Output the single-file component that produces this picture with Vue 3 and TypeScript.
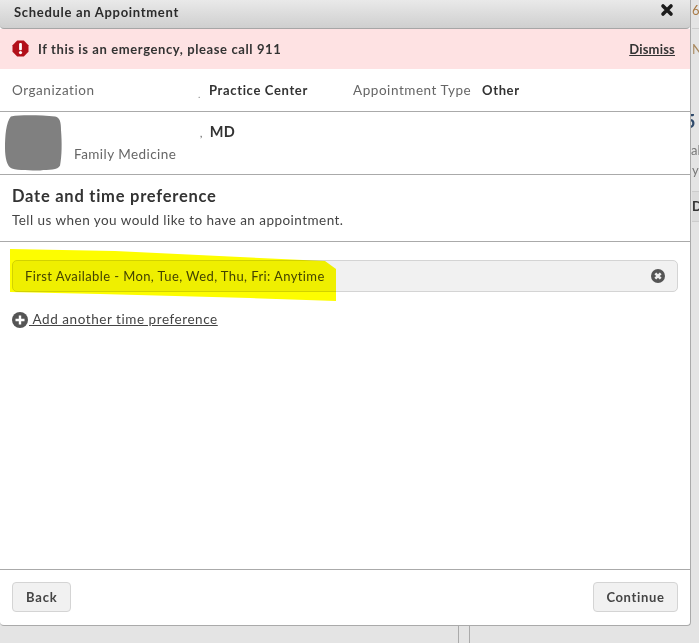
<script setup lang="ts">
const title = 'Schedule an Appointment'
const slot = 'First Available - Mon, Tue, Wed, Thu, Fri: Anytime'
</script>

<template>
  <div class="page">
    <section class="modal">
      <header class="head">
        <h1>{{ title }}</h1>
        <svg class="close" viewBox="0 0 14 14" width="14" height="14"><path d="M3 3 L11 11 M11 3 L3 11" stroke="#1c1c1c" stroke-width="3.6" stroke-linecap="round" /></svg>
      </header>
      <div class="alert">
        <svg class="alert-icon" viewBox="0 0 17 17" width="17" height="17">
          <path d="M5.2 0.5 H11.8 L16.5 5.2 V11.8 L11.8 16.5 H5.2 L0.5 11.8 V5.2 Z" fill="#b2101a" />
          <rect x="7.1" y="3" width="2.8" height="7.2" rx="1" fill="#fff" />
          <circle cx="8.5" cy="12.6" r="1.6" fill="#fff" />
        </svg>
        <strong>If this is an emergency, please call 911</strong>
        <a class="dismiss">Dismiss</a>
      </div>
      <div class="info">
        <span class="label org">Organization</span>
        <span class="dot">.</span>
        <strong class="val pc">Practice Center</strong>
        <span class="label type">Appointment Type</span>
        <strong class="val">Other</strong>
      </div>
      <div class="provider">
        <svg class="avatar" viewBox="0 0 58 58" width="57" height="58">
          <path d="M6 2 C18 0 38 1 51 2 C56 3 57 8 57 16 C58 28 58 42 56 52 C54 57 44 56 36 57 C26 57 14 57 7 55 C2 53 0 44 0 34 C0 22 1 8 6 2 Z" fill="#808080" />
        </svg>
        <div class="spec">Family Medicine</div>
        <div class="name"><span class="comma">,</span> MD</div>
      </div>
      <div class="intro">
        <h2>Date and time preference</h2>
        <p>Tell us when you would like to have an appointment.</p>
      </div>
      <div class="body">
        <div class="pref">
          <span>{{ slot }}</span>
          <svg class="x" viewBox="0 0 14 14" width="14" height="14">
            <circle cx="7" cy="7" r="7" fill="#555" />
            <path d="M4.3 4.3 L9.7 9.7 M9.7 4.3 L4.3 9.7" stroke="#eee" stroke-width="2.6" />
          </svg>
          <svg class="marker" viewBox="0 0 326 54" width="326" height="54">
            <path d="M0 0 L105 2 L230 8 L315 12 L326 20 L326 52 L240 49 L90 45 L0 43 Z" fill="#fdfd00" />
          </svg>
        </div>
        <a class="add">
          <svg viewBox="0 0 16 16" width="16" height="16">
            <circle cx="8" cy="8" r="8" fill="#555" />
            <path d="M8 3.5 V12.5 M3.5 8 H12.5" stroke="#fff" stroke-width="2.4" />
          </svg>
          <span> Add another time preference</span>
        </a>
      </div>
      <footer class="foot">
        <button type="button" class="back">Back</button>
        <button type="button" class="next">Continue</button>
      </footer>
    </section>
    <aside class="side">
      <div class="s1">6</div>
      <div class="s2">N</div>
      <div class="s3">5</div>
      <div class="s4">all</div>
      <div class="s5">y</div>
      <div class="s6">D</div>
    </aside>
    <div class="under"><i></i></div>
  </div>
</template>

<style>
html, body { margin: 0; background: #e4e4e4; }
</style>

<style scoped>
.page {
  width: 699px;
  height: 643px;
  overflow: hidden;
  display: grid;
  grid-template-columns: 691px 8px;
  grid-template-rows: 626px 17px;
  background: #e4e4e4;
  font-family: Lato, "Open Sans", sans-serif;
  color: #333;
}
.modal {
  display: flex;
  flex-direction: column;
  min-width: 0;
  background: #fff;
  border-right: 1px solid #aaa;
  border-bottom: 1px solid #aaa;
  border-radius: 0 0 4px 4px;
}
.head {
  height: 28px;
  display: flex;
  align-items: center;
  justify-content: space-between;
  padding: 0 12px 0 14px;
  background: linear-gradient(#e9e9e9, #cfcfcf);
  border-bottom: 1px solid #a6a6a6;
  border-radius: 0 0 4px 4px;
}
.head h1 {
  margin: -5px 0 0;
  font-size: 13px;
  font-weight: 700;
  letter-spacing: 0.7px;
  color: #2b2b2b;
}
.close { margin-top: -8px; margin-right: 4px; }
.alert {
  height: 40px;
  display: flex;
  align-items: center;
  padding: 0 15px 0 12px;
  background: #fee2e3;
  font-size: 13px;
  color: #333;
}
.alert strong { margin-left: 9px; letter-spacing: 0.6px; }
.alert-icon { margin-top: -2px; }
.dismiss {
  margin-left: auto;
  font-weight: 700;
  letter-spacing: 0.2px;
  text-decoration: underline;
}
.info {
  height: 42px;
  display: flex;
  align-items: center;
  padding-left: 12px;
  border-bottom: 1px solid #aaa;
  font-size: 13.5px;
}
.label { color: #666; font-weight: 400; letter-spacing: 0.55px; }
.org { width: 186px; }
.dot { width: 11px; color: #888; font-size: 10px; margin-top: 8px; }
.val { font-size: 13px; color: #333; letter-spacing: 0.65px; }
.pc { width: 144px; }
.type { width: 129px; }
.provider {
  position: relative;
  height: 62px;
  border-bottom: 1px solid #aaa;
  display: grid;
  grid-template-columns: 74px 126px 1fr;
  grid-template-rows: 1fr auto;
}
.avatar { position: absolute; left: 5px; top: 2px; }
.spec {
  grid-column: 2;
  grid-row: 2;
  font-size: 13.5px;
  color: #666;
  letter-spacing: 0.45px;
  padding-bottom: 12px;
  white-space: nowrap;
}
.name {
  grid-column: 3;
  grid-row: 1;
  font-size: 14.5px;
  font-weight: 700;
  padding-top: 11px;
  letter-spacing: 0.4px;
}
.comma { color: #777; font-size: 10px; margin-right: 3px; }
.intro {
  height: 67px;
  box-sizing: border-box;
  padding: 11px 12px 0;
  border-bottom: 1px solid #aaa;
}
.intro h2 {
  margin: 0 0 6px;
  font-size: 16.5px;
  font-weight: 700;
  letter-spacing: 0.75px;
  color: #333;
}
.intro p {
  margin: 0;
  font-size: 13.5px;
  letter-spacing: 0.46px;
  color: #444;
}
.body {
  flex: 1;
  padding: 18px 12px 0;
}
.pref {
  position: relative;
  height: 30px;
  display: flex;
  align-items: center;
  justify-content: space-between;
  padding: 0 12px;
  background: #f1f1f1;
  border: 1px solid #d4d4d4;
  border-radius: 5px;
  font-size: 13px;
  letter-spacing: 0.4px;
  color: #444;
}
.marker {
  position: absolute;
  left: -3px;
  top: -12px;
  mix-blend-mode: multiply;
  pointer-events: none;
}
.add {
  display: flex;
  align-items: center;
  margin-top: 17px;
  font-size: 13.5px;
  letter-spacing: 0.55px;
  color: #444;
}
.add svg { margin-top: 3px; }
.add span { text-decoration: underline; white-space: pre; margin-left: 1px; }
.foot {
  height: 56px;
  box-sizing: border-box;
  display: flex;
  align-items: flex-start;
  justify-content: space-between;
  padding: 12px 12px 0;
  border-top: 1px solid #aaa;
}
.foot button {
  height: 30px;
  padding: 0 13px;
  background: #f1f1f1;
  border: 1px solid #d4d4d4;
  border-radius: 4px;
  font: 700 13px Lato, sans-serif;
  letter-spacing: 0.65px;
  color: #444;
}
.foot .back { padding: 0 13px; letter-spacing: 0.8px; }
.foot .next { padding: 0 12.5px; }
.side {
  overflow: hidden;
  font-size: 13px;
  color: #777;
  padding-left: 1px;
}
.side div { line-height: 16px; }
.s1 { height: 29px; box-sizing: border-box; padding-top: 2px; border-bottom: 1px solid #ccc; color: #a97a45; }
.s2 { height: 54px; padding-top: 12px; box-sizing: border-box; color: #a98a60; }
.s3 { margin-top: 30px; font: 700 18px Lato, sans-serif; color: #2f4a6b; margin-left: -7px; height: 28px; }
.s4 { height: 20px; margin-left: -1px; margin-top: 1px; }
.s5 { height: 20px; }
.s6 { height: 29px; line-height: 29px !important; background: #dcdcdc; border-top: 1px solid #ccc; border-bottom: 1px solid #ccc; font-weight: 700; color: #333; margin-top: 9px; }
.under {
  grid-column: 1 / 3;
  padding-left: 458px;
}
.under i {
  display: block;
  width: 10px;
  height: 17px;
  border-left: 1px solid #aaa;
  border-right: 1px solid #aaa;
}
</style>
